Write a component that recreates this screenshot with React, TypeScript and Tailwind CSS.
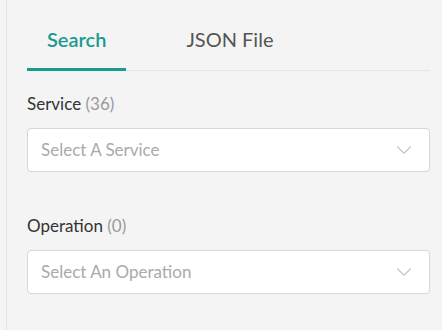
import { ChevronDown } from 'lucide-react'

interface SelectFieldProps {
    label: string
    count: number
    placeholder: string
}

function SelectField({ label, count, placeholder }: SelectFieldProps) {
    return (
        <div>
            <div className="text-[17px] leading-6 text-[#333333]">
                {label} <span className="text-[#9a9a9a]">({count})</span>
            </div>
            <div className="mt-3 h-[44px] flex items-center justify-between rounded bg-white border border-[#d6d6d6] pl-[13px] pr-[12px]">
                <span className="text-[17px] text-[#aaaaaa]">{placeholder}</span>
                <ChevronDown className="w-[26px] h-[26px] text-[#c4c4c4]" strokeWidth={1} />
            </div>
        </div>
    )
}

export default function App() {
    return (
        <div
            className="w-[442px] h-[330px] bg-[#f4f4f4] pl-[6px] overflow-hidden"
            style={{ fontFamily: 'Lato, "Liberation Sans", sans-serif' }}
        >
            <div className="h-full border-l border-[#e2e2e2] pl-[20px] pr-[12px]">
                {/* Tabs */}
                <div className="flex gap-10 border-b border-[#e4e4e4]">
                    <button className="px-5 pt-[25px] pb-[15px] leading-7 text-[20px] font-semibold text-[#1b9a90] border-b-[3px] border-[#1b9a90] -mb-px">
                        Search
                    </button>
                    <button className="px-5 pt-[25px] pb-[15px] leading-7 text-[20px] text-[#555555] border-b-[3px] border-transparent -mb-px">
                        JSON File
                    </button>
                </div>

                <div className="mt-[21px] flex flex-col gap-[42px]">
                    <SelectField label="Service" count={36} placeholder="Select A Service" />
                    <SelectField label="Operation" count={0} placeholder="Select An Operation" />
                </div>
            </div>
        </div>
    )
}
